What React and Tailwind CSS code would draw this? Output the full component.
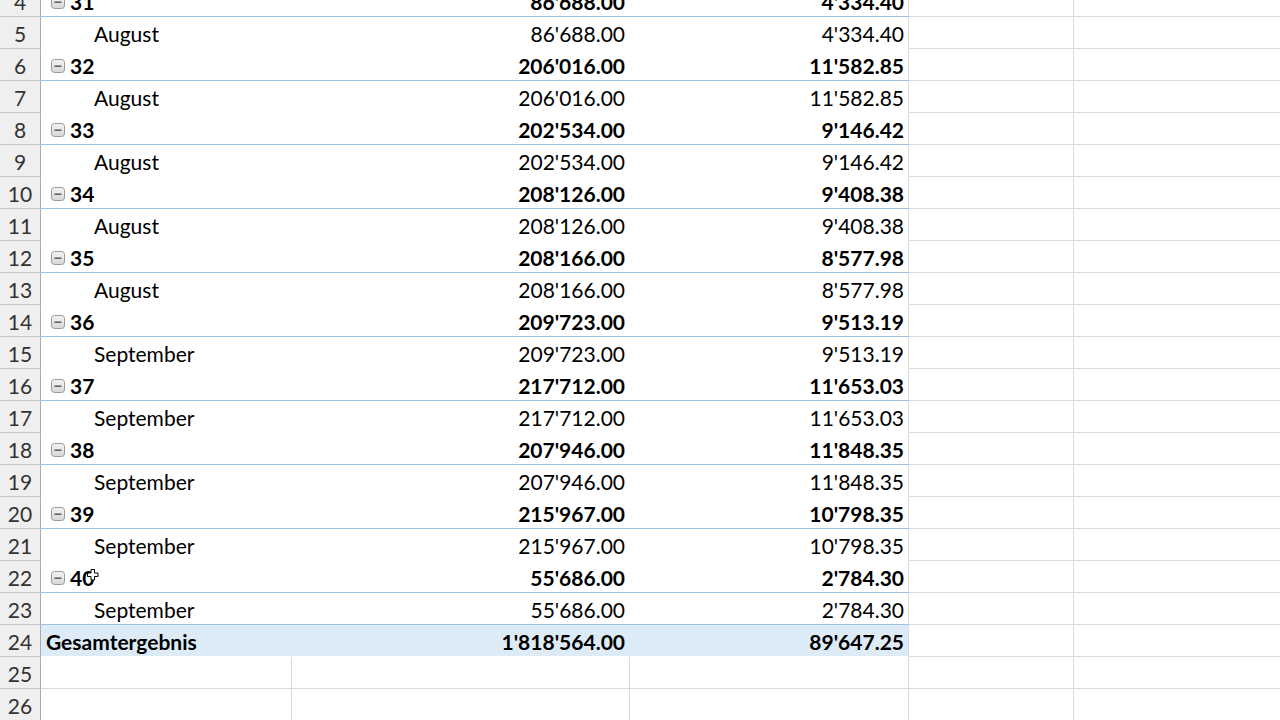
import React from 'react';

const weeks = [
  { n: 4, wk: '31', month: 'August', a: "86'688.00", b: "4'334.40" },
  { n: 6, wk: '32', month: 'August', a: "206'016.00", b: "11'582.85" },
  { n: 8, wk: '33', month: 'August', a: "202'534.00", b: "9'146.42" },
  { n: 10, wk: '34', month: 'August', a: "208'126.00", b: "9'408.38" },
  { n: 12, wk: '35', month: 'August', a: "208'166.00", b: "8'577.98" },
  { n: 14, wk: '36', month: 'September', a: "209'723.00", b: "9'513.19" },
  { n: 16, wk: '37', month: 'September', a: "217'712.00", b: "11'653.03" },
  { n: 18, wk: '38', month: 'September', a: "207'946.00", b: "11'848.35" },
  { n: 20, wk: '39', month: 'September', a: "215'967.00", b: "10'798.35" },
  { n: 22, wk: '40', month: 'September', a: "55'686.00", b: "2'784.30" },
];

function MinusBox() {
  return (
    <svg width="14" height="14" viewBox="0 0 14 14" className="shrink-0">
      <defs>
        <linearGradient id="mb" x1="0" y1="0" x2="0" y2="1">
          <stop offset="0" stopColor="#f4f4f4" />
          <stop offset="1" stopColor="#d6d6d6" />
        </linearGradient>
      </defs>
      <rect x="0.5" y="0.5" width="13" height="13" rx="3" fill="url(#mb)" stroke="#8f9aa6" />
      <rect x="3.5" y="6.5" width="7" height="1.5" fill="#5a5a5a" />
    </svg>
  );
}

// excel's little fat cross over the pivot label
function Cursor() {
  return (
    <svg width="12" height="12" viewBox="0 0 12 12" className="absolute left-[46px] top-[-8px]">
      <path d="M4 0.5h3.5v3.5h3.5v3.5h-3.5v3.5h-3.5v-3.5h-3.5v-3.5h3.5z" fill="#fff" stroke="#000" strokeWidth="1" />
    </svg>
  );
}

function RowHead({ n }) {
  return (
    <div className="w-[41px] shrink-0 h-full flex items-center justify-center pt-[2px] bg-[#efefef] border-r border-r-[#ababab] border-b border-b-[#c8c8c8] text-[#333]">
      {n}
    </div>
  );
}

function Tail() {
  return (
    <>
      <div className="w-[165px] shrink-0 h-full border-r border-b border-[#dadada]" />
      <div className="flex-1 h-full border-b border-[#dadada]" />
    </>
  );
}

function PivotRow({ n, label, a, b, bold, line, indent, icon, fill, cursor }) {
  const edge = line ? 'border-b border-b-[#9bc2e6]' : 'border-b border-b-white';
  const bg = fill ? 'bg-[#ddebf7]' : 'bg-white';
  const weight = bold ? 'font-bold' : 'font-normal';
  return (
    <div className="flex h-[32px]">
      <RowHead n={n} />
      <div className={`w-[251px] shrink-0 h-full flex items-center pt-[2px] ${edge} ${bg} ${weight} relative`}>
        {icon && <div className="ml-[10px] mr-[5px] flex items-center"><MinusBox /></div>}
        {indent && <div className="w-[53px] shrink-0" />}
        {!icon && !indent && <div className="w-[5px] shrink-0" />}
        <span>{label}</span>
        {cursor && <div className="absolute left-0 top-1/2"><Cursor /></div>}
      </div>
      <div className={`w-[338px] shrink-0 h-full flex items-center justify-end pt-[2px] pr-[5px] ${edge} ${bg} ${weight}`}>
        {a}
      </div>
      <div className={`w-[279px] shrink-0 h-full flex items-center justify-end pt-[2px] pr-[4px] border-r border-r-[#dadada] ${edge} ${bg} ${weight}`}>
        {b}
      </div>
      <Tail />
    </div>
  );
}

function EmptyRow({ n }) {
  return (
    <div className="flex h-[32px]">
      <RowHead n={n} />
      <div className="w-[251px] shrink-0 h-full border-r border-b border-[#dadada]" />
      <div className="w-[338px] shrink-0 h-full border-r border-b border-[#dadada]" />
      <div className="w-[279px] shrink-0 h-full border-r border-b border-[#dadada]" />
      <Tail />
    </div>
  );
}

export default function App() {
  return (
    <div className="w-[1280px] h-[720px] overflow-hidden bg-white text-black text-[21px] leading-none font-['Lato','Noto_Sans',sans-serif]">
      <div className="mt-[-15px]">
        {weeks.map((w) => (
          <React.Fragment key={w.n}>
            <PivotRow n={w.n} label={w.wk} a={w.a} b={w.b} bold line icon cursor={w.wk === '40'} />
            <PivotRow n={w.n + 1} label={w.month} a={w.a} b={w.b} indent line={w.n === 22} />
          </React.Fragment>
        ))}
        <PivotRow n={24} label="Gesamtergebnis" a="1'818'564.00" b="89'647.25" bold fill />
        <EmptyRow n={25} />
        <EmptyRow n={26} />
      </div>
    </div>
  );
}
